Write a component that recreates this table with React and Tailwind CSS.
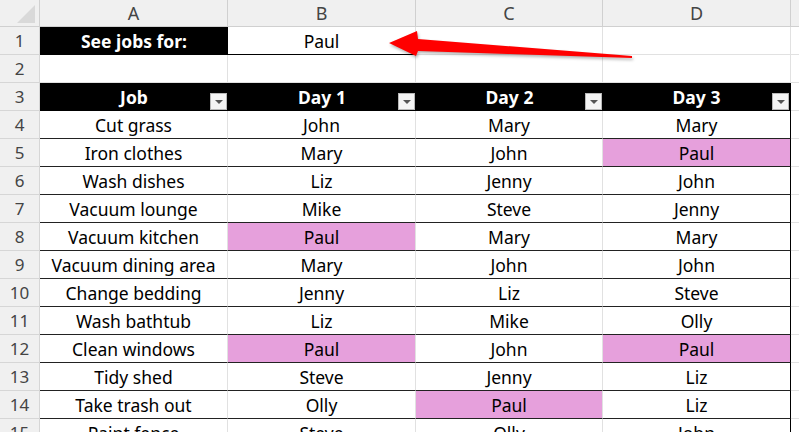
const PINK = 'bg-[#e6a0dc]';

const rows = [
  ['Cut grass', 'John', 'Mary', 'Mary'],
  ['Iron clothes', 'Mary', 'John', 'Paul'],
  ['Wash dishes', 'Liz', 'Jenny', 'John'],
  ['Vacuum lounge', 'Mike', 'Steve', 'Jenny'],
  ['Vacuum kitchen', 'Paul', 'Mary', 'Mary'],
  ['Vacuum dining area', 'Mary', 'John', 'John'],
  ['Change bedding', 'Jenny', 'Liz', 'Steve'],
  ['Wash bathtub', 'Liz', 'Mike', 'Olly'],
  ['Clean windows', 'Paul', 'John', 'Paul'],
  ['Tidy shed', 'Steve', 'Jenny', 'Liz'],
  ['Take trash out', 'Olly', 'Paul', 'Liz'],
  ['Paint fence', 'Steve', 'Olly', 'John'],
];

const widths = ['w-[188px]', 'w-[188px]', 'w-[187px]', 'w-[188px]'];

function RowHead({ n }) {
  return (
    <div className="w-[40px] shrink-0 h-full flex items-center justify-center pt-[1px] bg-[#f0f0f0] border-r border-b border-[#d6d6d6] text-[#444] text-[17px]">
      {n}
    </div>
  );
}

function Filter() {
  return (
    <div className="absolute right-[1px] bottom-[1px] w-[17px] h-[17px] bg-[#f4f4f4] border border-[#b8b8b8] flex items-center justify-center">
      <div className="w-0 h-0 border-l-[4px] border-r-[4px] border-t-[4px] border-l-transparent border-r-transparent border-t-[#555]" />
    </div>
  );
}

function Arrow() {
  return (
    <svg className="absolute left-0 top-0 pointer-events-none" width="799" height="432" style={{ filter: 'drop-shadow(1px 2px 1.5px rgba(0,0,0,0.3))' }}>
      <polygon points="389,43 417,31 418,39 632,56 632,58 418,51 416,56" fill="#ff0000" />
    </svg>
  );
}

export default function App() {
  return (
    <div className="relative w-[799px] h-[432px] overflow-hidden bg-white font-['Noto_Sans',sans-serif] text-[17.5px] text-black">
      {/* column letters */}
      <div className="flex h-[27px]">
        <div className="w-[40px] shrink-0 h-full bg-[#f0f0f0] border-r border-b border-[#d0d0d0] relative">
          <svg className="absolute left-0 top-0" width="40" height="27">
            <polygon points="17,23 35,23 35,5" fill="#d9d9d9" />
          </svg>
        </div>
        {['A', 'B', 'C', 'D'].map((l, i) => (
          <div key={l} className={`${widths[i]} shrink-0 h-full flex items-center justify-center bg-[#f0f0f0] border-r border-b border-[#d0d0d0] text-[#444] text-[18px]`}>
            {l}
          </div>
        ))}
        <div className="flex-1 h-full bg-[#f0f0f0] border-b border-[#d0d0d0]" />
      </div>

      {/* row 1 */}
      <div className="flex h-[28px]">
        <RowHead n={1} />
        <div className={`${widths[0]} shrink-0 h-full flex items-center justify-center pt-[1px] bg-black text-white font-bold border-b border-black`}>
          See jobs for:
        </div>
        <div className={`${widths[1]} shrink-0 h-full flex items-center justify-center pt-[1px] border-r border-b border-r-[#e1e1e1] border-b-black`}>
          Paul
        </div>
        <div className={`${widths[2]} shrink-0 h-full border-r border-b border-[#e1e1e1]`} />
        <div className={`${widths[3]} shrink-0 h-full border-r border-b border-[#e1e1e1]`} />
        <div className="flex-1 h-full border-b border-[#e1e1e1]" />
      </div>

      {/* row 2 */}
      <div className="flex h-[28px]">
        <RowHead n={2} />
        {widths.map((w, i) => (
          <div key={i} className={`${w} shrink-0 h-full border-r border-b border-[#e1e1e1]`} />
        ))}
        <div className="flex-1 h-full border-b border-[#e1e1e1]" />
      </div>

      {/* row 3 header */}
      <div className="flex h-[28px]">
        <RowHead n={3} />
        {['Job', 'Day 1', 'Day 2', 'Day 3'].map((h, i) => (
          <div key={h} className={`${widths[i]} shrink-0 h-full relative flex items-center justify-center pt-[1px] bg-black text-white font-bold ${i === 3 ? 'border-r border-black' : ''}`}>
            {h}
            <Filter />
          </div>
        ))}
        <div className="flex-1 h-full border-b border-[#e1e1e1]" />
      </div>

      {rows.map((r, ri) => (
        <div key={ri} className="flex h-[28px]">
          <RowHead n={ri + 4} />
          {r.map((v, ci) => {
            const pink = ci > 0 && v === 'Paul';
            return (
              <div
                key={ci}
                className={`${widths[ci]} shrink-0 h-full flex items-center justify-center pt-[1px] border-b border-b-[#222] ${ci === 3 ? 'border-r border-r-black' : 'border-r border-r-[#e1e1e1]'} ${pink ? PINK : ''}`}
              >
                {v}
              </div>
            );
          })}
          <div className="flex-1 h-full border-b border-[#e1e1e1]" />
        </div>
      ))}

      <Arrow />
    </div>
  );
}
